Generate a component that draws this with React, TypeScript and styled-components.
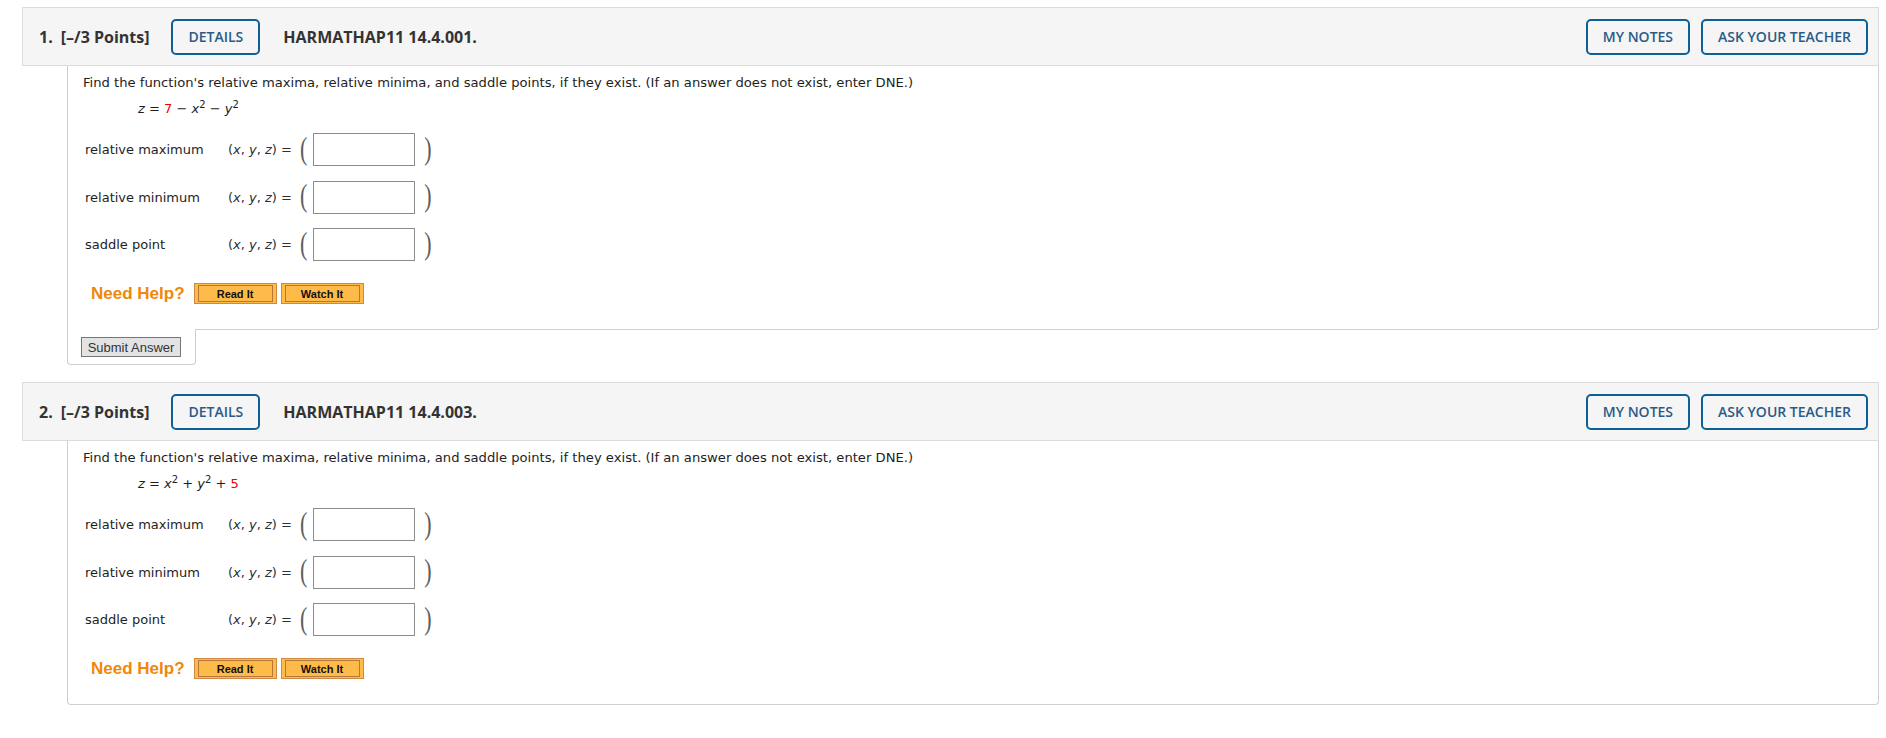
import React from 'react';
import styled, { createGlobalStyle } from 'styled-components';

const GlobalStyle = createGlobalStyle`
  html, body { margin: 0; padding: 0; background: #ffffff; }
  body { font-family: "DejaVu Sans", Verdana, sans-serif; color: #1e1e1e; }
  * { box-sizing: border-box; }
`;

const Page = styled.main`
  padding: 7px 7px 0 22px;
`;

const Question = styled.section`
  margin-bottom: 17px;
`;

const Header = styled.header`
  display: flex;
  align-items: center;
  height: 59px;
  padding: 0 10px 0 16px;
  background: #f5f5f5;
  border: 1px solid #dcdcdc;
  font-family: "Open Sans", sans-serif;
  color: #333333;
`;

const QNum = styled.span`
  font-size: 16px;
  font-weight: 700;
  margin-right: 8px;
`;

const Points = styled.span`
  font-size: 16px;
  font-weight: 700;
`;

const Code = styled.span`
  font-size: 16px;
  font-weight: 700;
  margin-left: 23px;
`;

const Spacer = styled.div`
  flex: 1;
`;

const OutlineButton = styled.button<{ $lead?: number }>`
  height: 36px;
  margin-left: ${(p) => p.$lead ?? 0}px;
  padding: 0 15px;
  border: 2px solid #0f5f97;
  border-radius: 5px;
  background: transparent;
  font-family: "Open Sans", sans-serif;
  font-size: 14px;
  font-weight: 600;
  color: #2a5b88;
  cursor: pointer;
`;

const Panel = styled.div<{ $tab?: boolean }>`
  margin-left: 45px;
  border: 1px solid #cfcfcf;
  border-top: none;
  border-radius: ${(p) => (p.$tab ? '0 0 4px 0' : '0 0 4px 4px')};
  padding: 8px 16px 25px 15px;
`;

const Prompt = styled.p`
  margin: 0;
  font-size: 13.15px;
  line-height: 18px;
`;

const Equation = styled.div`
  margin: 8px 0 0 55px;
  font-size: 13px;
  line-height: 18px;
  sup { font-size: 10px; line-height: 0; vertical-align: 5px; }
`;

const Var = styled.i`
  font-style: italic;
`;

const Num = styled.span`
  color: #ee0000;
`;

const Rows = styled.div`
  display: grid;
  row-gap: 14.5px;
  margin-top: 15px;
  padding-left: 2px;
`;

const Row = styled.div`
  display: flex;
  align-items: center;
  height: 33px;
  font-size: 13px;
`;

const RowLabel = styled.span`
  width: 143px;
`;

const Coords = styled.span`
  width: 72px;
  color: #2b2f3a;
`;

const Paren = styled.span<{ $side: 'l' | 'r' }>`
  display: inline-block;
  font-family: "Liberation Serif", serif;
  font-size: 22px;
  line-height: 1;
  color: #5e5e5e;
  transform: scaleY(1.45);
  margin: ${(p) => (p.$side === 'l' ? '0 6px 2px 0' : '0 0 2px 9px')};
`;

const AnswerBox = styled.input`
  width: 102px;
  height: 33px;
  border: 1px solid #8c8c8c;
  background: #ffffff;
  padding: 0;
`;

const HelpRow = styled.div`
  display: flex;
  align-items: center;
  gap: 4px;
  margin: 22px 0 0 8px;
`;

const HelpTitle = styled.span`
  font-family: "Liberation Sans", Arial, sans-serif;
  font-size: 17px;
  font-weight: 700;
  color: #f08708;
  margin-right: 5px;
`;

const HelpButton = styled.button`
  display: flex;
  width: 83px;
  height: 21px;
  padding: 1px 3px;
  border: 1px solid #d08a3e;
  background: #ffbb4a;
  cursor: pointer;
`;

const HelpInner = styled.span`
  flex: 1;
  display: flex;
  align-items: center;
  justify-content: center;
  border: 1px solid #b5773a;
  font-family: "Liberation Sans", Arial, sans-serif;
  font-size: 11px;
  font-weight: 700;
  color: #111111;
`;

const SubmitTab = styled.div`
  width: 129px;
  margin: -1px 0 0 45px;
  padding: 8px 0 7px 13px;
  border: 1px solid #cfcfcf;
  border-top: none;
  border-radius: 0 0 4px 4px;
  background: #ffffff;
`;

const SubmitButton = styled.button`
  display: block;
  width: 100px;
  height: 20px;
  padding: 0;
  border: 1px solid #767676;
  background: #e3e3e3;
  font-family: "Liberation Sans", Arial, sans-serif;
  font-size: 13px;
  color: #333333;
`;

type Part = { label: string };

const parts: Part[] = [
  { label: 'relative maximum' },
  { label: 'relative minimum' },
  { label: 'saddle point' },
];

type Q = {
  n: number;
  code: string;
  eq: React.ReactNode;
  submit: boolean;
};

const questions: Q[] = [
  {
    n: 1,
    code: 'HARMATHAP11 14.4.001.',
    eq: (
      <>
        <Var>z</Var> = <Num>7</Num> − <Var>x</Var>
        <sup>2</sup> − <Var>y</Var>
        <sup>2</sup>
      </>
    ),
    submit: true,
  },
  {
    n: 2,
    code: 'HARMATHAP11 14.4.003.',
    eq: (
      <>
        <Var>z</Var> = <Var>x</Var>
        <sup>2</sup> + <Var>y</Var>
        <sup>2</sup> + <Num>5</Num>
      </>
    ),
    submit: false,
  },
];

function QuestionBlock({ q }: { q: Q }) {
  return (
    <Question>
      <Header>
        <QNum>{q.n}.</QNum>
        <Points>[–/3 Points]</Points>
        <OutlineButton $lead={22}>DETAILS</OutlineButton>
        <Code>{q.code}</Code>
        <Spacer />
        <OutlineButton>MY NOTES</OutlineButton>
        <OutlineButton $lead={11}>ASK YOUR TEACHER</OutlineButton>
      </Header>
      <Panel $tab={q.submit}>
        <Prompt>
          Find the function's relative maxima, relative minima, and saddle points, if they exist. (If an answer does
          not exist, enter DNE.)
        </Prompt>
        <Equation>{q.eq}</Equation>
        <Rows>
          {parts.map((p) => (
            <Row key={p.label}>
              <RowLabel>{p.label}</RowLabel>
              <Coords>
                (<Var>x</Var>, <Var>y</Var>, <Var>z</Var>) =
              </Coords>
              <Paren $side="l">(</Paren>
              <AnswerBox type="text" aria-label={p.label} />
              <Paren $side="r">)</Paren>
            </Row>
          ))}
        </Rows>
        <HelpRow>
          <HelpTitle>Need Help?</HelpTitle>
          <HelpButton>
            <HelpInner>Read It</HelpInner>
          </HelpButton>
          <HelpButton>
            <HelpInner>Watch It</HelpInner>
          </HelpButton>
        </HelpRow>
      </Panel>
      {q.submit && (
        <SubmitTab>
          <SubmitButton>Submit Answer</SubmitButton>
        </SubmitTab>
      )}
    </Question>
  );
}

export default function App() {
  return (
    <>
      <GlobalStyle />
      <Page>
        {questions.map((q) => (
          <QuestionBlock key={q.n} q={q} />
        ))}
      </Page>
    </>
  );
}
